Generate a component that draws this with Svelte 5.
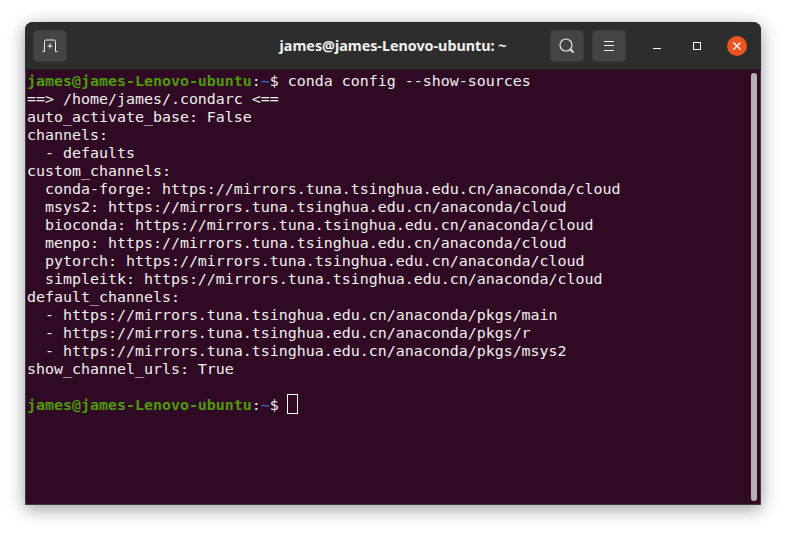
<script lang="ts">
	const lines = [
		'==> /home/james/.condarc <==',
		'auto_activate_base: False',
		'channels:',
		'  - defaults',
		'custom_channels:',
		'  conda-forge: https://mirrors.tuna.tsinghua.edu.cn/anaconda/cloud',
		'  msys2: https://mirrors.tuna.tsinghua.edu.cn/anaconda/cloud',
		'  bioconda: https://mirrors.tuna.tsinghua.edu.cn/anaconda/cloud',
		'  menpo: https://mirrors.tuna.tsinghua.edu.cn/anaconda/cloud',
		'  pytorch: https://mirrors.tuna.tsinghua.edu.cn/anaconda/cloud',
		'  simpleitk: https://mirrors.tuna.tsinghua.edu.cn/anaconda/cloud',
		'default_channels:',
		'  - https://mirrors.tuna.tsinghua.edu.cn/anaconda/pkgs/main',
		'  - https://mirrors.tuna.tsinghua.edu.cn/anaconda/pkgs/r',
		'  - https://mirrors.tuna.tsinghua.edu.cn/anaconda/pkgs/msys2',
		'show_channel_urls: True',
		''
	];
</script>

<div class="page">
	<div class="window">
		<header class="bar">
			<div class="left">
				<button class="tool" aria-label="New tab">
					<svg width="16" height="13" viewBox="0 0 16 13" fill="none" stroke="#eee" stroke-width="1">
						<path d="M0.500 12.500h2V2.500a1.500 1.500 0 0 1 1.500-1.500h8a1.500 1.500 0 0 1 1.500 1.500v10h2" />
						<path d="M8 4.500v5M5.500 7h5" />
					</svg>
				</button>
			</div>
			<div class="title">james@james-Lenovo-ubuntu: ~</div>
			<div class="right">
				<button class="tool" aria-label="Search">
					<svg width="16" height="16" viewBox="0 0 16 16" fill="none" stroke="#e6e6e6">
						<circle cx="7" cy="7" r="6" stroke-width="1.200" />
						<path d="M11.500 11.500l3 3" stroke-width="2" />
					</svg>
				</button>
				<button class="tool" aria-label="Menu">
					<svg width="10" height="10" viewBox="0 0 10 10" stroke="#eee" stroke-width="1">
						<path d="M0 0.500h10M0 4.500h10M0 9.500h10" />
					</svg>
				</button>
				<div class="controls">
					<svg class="min" width="8" height="1" viewBox="0 0 8 1"><rect width="8" height="1" fill="#fff" /></svg>
					<svg class="max" width="8" height="8" viewBox="0 0 8 8" fill="none" stroke="#fff"><rect x="0.500" y="0.500" width="7" height="7" /></svg>
					<div class="close">
						<svg width="8" height="8" viewBox="0 0 8 8" stroke="#fff" stroke-width="1.400"><path d="M0.500 0.500l7 7M7.500 0.500l-7 7" /></svg>
					</div>
				</div>
			</div>
		</header>
		<div class="term">
			<pre class="output"><span class="prompt">james@james-Lenovo-ubuntu</span>:<span class="cwd">~</span>$ conda config --show-sources
{#each lines as line}{line}
{/each}<span class="prompt">james@james-Lenovo-ubuntu</span>:<span class="cwd">~</span>$ <span class="cursor"></span></pre>
			<div class="thumb"></div>
		</div>
	</div>
</div>

<style>
	:global(body) {
		background: #fff;
	}
	.page {
		width: 786px;
		height: 533px;
		padding: 22px 25px 0;
		box-sizing: border-box;
		overflow: hidden;
	}
	.window {
		height: 483px;
		display: flex;
		flex-direction: column;
		border-radius: 8px 8px 0 0;
		box-shadow: 0 4px 18px rgba(0, 0, 0, 0.4);
		background: #2d2d2d;
		overflow: hidden;
	}
	.bar {
		height: 47px;
		flex: none;
		display: grid;
		grid-template-columns: 1fr auto 1fr;
		align-items: center;
		padding: 0 14px 0 8px;
		background: #2d2d2d;
		border-bottom: 1px solid #1f1f1f;
	}
	.left {
		display: flex;
	}
	.right {
		display: flex;
		align-items: center;
		justify-content: flex-end;
		gap: 8px;
	}
	.tool {
		width: 34px;
		height: 32px;
		padding: 0;
		display: flex;
		align-items: center;
		justify-content: center;
		background: #444;
		border: 1px solid #3a3a3a;
		border-radius: 4px;
	}
	.title {
		color: #f2f2f2;
		font: 700 14.300px "Noto Sans", "Open Sans", sans-serif;
		padding-left: 6px;
	}
	.controls {
		margin-left: 19px;
		display: flex;
		align-items: center;
	}
	.min {
		margin-top: 6px;
	}
	.max {
		margin: 0 26px 0 32px;
	}
	.close {
		width: 20px;
		height: 20px;
		border-radius: 50%;
		background: #e95420;
		display: flex;
		align-items: center;
		justify-content: center;
	}
	.term {
		flex: 1;
		min-height: 0;
		display: flex;
		background: #300a24;
		border: 1px solid #3c3c3c;
		border-width: 0 1px 1px;
		padding-top: 2px;
	}
	.output {
		flex: 1;
		margin: 0;
		padding-left: 1px;
		color: #f0f0ee;
		font: 400 14.950px/18px "DejaVu Sans Mono", monospace;
	}
	.prompt {
		color: #4e9a06;
		font-weight: 700;
	}
	.cwd {
		color: #3465a4;
		font-weight: 700;
	}
	.cursor {
		display: inline-block;
		width: 9px;
		height: 18px;
		margin: -2px 0 0 -1px;
		border: 1px solid #fff;
		vertical-align: top;
	}
	.thumb {
		width: 6px;
		margin: 1px 3px 3px 0;
		background: #b6b2b4;
		border-radius: 3px;
	}
</style>
